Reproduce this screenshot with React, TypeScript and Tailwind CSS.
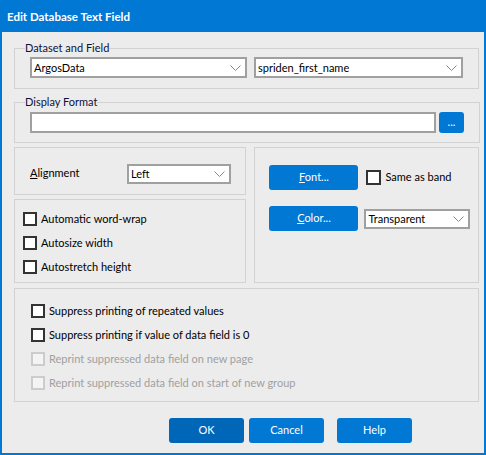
import React from 'react';

const Chevron = () => (
  <svg width="11" height="6" viewBox="0 0 11 6" className="shrink-0">
    <polyline points="0.5,0.5 5.5,5.5 10.5,0.5" fill="none" stroke="#8a8a8a" strokeWidth="1" />
  </svg>
);

const Combo = ({ value, className }: { value: string; className: string }) => (
  <div className={`flex items-center justify-between bg-white border-2 border-[#a0a0a0] pl-[2px] pr-[4px] ${className}`}>
    <span className="leading-none">{value}</span>
    <Chevron />
  </div>
);

const Check = ({ label, disabled }: { label: string; disabled?: boolean }) => (
  <div className="flex items-center h-[24px]">
    <span
      className={`w-[14px] h-[14px] border-2 ${disabled ? 'border-[#cccccc] bg-[#f4f4f4]' : 'border-[#333333] bg-white'}`}
    />
    <span className={`ml-[4px] ${disabled ? 'text-[#a0a0a0]' : ''}`}>{label}</span>
  </div>
);

const BlueButton = ({ children, dark, className = '' }: { children: React.ReactNode; dark?: boolean; className?: string }) => (
  <button
    className={`flex items-center justify-center rounded-[3px] text-white ${dark ? 'bg-[#0067b8]' : 'bg-[#0078d4]'} ${className}`}
  >
    {children}
  </button>
);

export default function App() {
  return (
    <div className="w-[486px] h-[455px] border-2 border-[#0078d4] bg-[#ececec] flex flex-col font-['Lato',sans-serif] text-[11px] text-black">
      {/* title bar */}
      <div className="h-[30px] shrink-0 bg-[#0078d4] text-white text-[11.5px] font-bold flex items-center pl-[5px]">
        Edit Database Text Field
      </div>

      <div className="flex flex-col pl-[12px] pr-[5px]">
        {/* Dataset and Field */}
        <fieldset className="mt-[8px] border border-[#d2d2d2]">
          <legend className="ml-[10px] leading-[16px] text-[#10103a]">Dataset and Field</legend>
          <div className="flex gap-[7px] px-[15px] pt-[1px] pb-[10px]">
            <Combo value="ArgosData" className="w-[217px] h-[21px]" />
            <Combo value="spriden_first_name" className="w-[209px] h-[21px]" />
          </div>
        </fieldset>

        {/* Display Format */}
        <fieldset className="mt-[5px] border border-[#d2d2d2]">
          <legend className="ml-[10px] leading-[16px] text-[#10103a]">Display Format</legend>
          <div className="flex gap-[3px] px-[15px] pt-[2px] pb-[9px]">
            <div className="w-[406px] h-[21px] bg-white border-2 border-[#a0a0a0]" />
            <BlueButton className="w-[25px] h-[21px] leading-none pb-[2px]">...</BlueButton>
          </div>
        </fieldset>

        {/* middle row */}
        <div className="mt-[4px] flex gap-[8px]">
          <div className="w-[233px] flex flex-col gap-[4px]">
            <div className="h-[48px] border border-[#d2d2d2] flex items-center pl-[15px] pt-[5px]">
              <span className="w-[97px]">
                <span className="underline">A</span>lignment
              </span>
              <Combo value="Left" className="w-[104px] h-[20px]" />
            </div>
            <div className="h-[84px] border border-[#d2d2d2] pl-[8px] pt-[7px]">
              <Check label="Automatic word-wrap" />
              <Check label="Autosize width" />
              <Check label="Autostretch height" />
            </div>
          </div>

          <div className="w-[225px] h-[136px] border border-[#d2d2d2] pl-[14px] pt-[17px]">
            <div className="flex items-center">
              <BlueButton className="w-[89px] h-[25px]">
                <span>
                  <span className="underline">F</span>ont...
                </span>
              </BlueButton>
              <span className="ml-[8px] w-[15px] h-[15px] border-2 border-[#333333] bg-white" />
              <span className="ml-[4px]">Same as band</span>
            </div>
            <div className="mt-[16px] flex items-center">
              <BlueButton className="w-[89px] h-[25px]">
                <span>
                  <span className="underline">C</span>olor...
                </span>
              </BlueButton>
              <Combo value="Transparent" className="ml-[6px] w-[106px] h-[20px]" />
            </div>
          </div>
        </div>

        {/* suppress options */}
        <div className="mt-[5px] h-[114px] border border-[#d2d2d2] pl-[16px] pt-[10px]">
          <Check label="Suppress printing of repeated values" />
          <Check label="Suppress printing if value of data field is 0" />
          <Check label="Reprint suppressed data field on new page" disabled />
          <Check label="Reprint suppressed data field on start of new group" disabled />
        </div>

        {/* buttons */}
        <div className="mt-[16px] ml-[155px] flex">
          <BlueButton dark className="w-[75px] h-[25px]">OK</BlueButton>
          <BlueButton className="ml-[5px] w-[75px] h-[25px]">Cancel</BlueButton>
          <BlueButton className="ml-[13px] w-[75px] h-[25px]">Help</BlueButton>
        </div>
      </div>
    </div>
  );
}
